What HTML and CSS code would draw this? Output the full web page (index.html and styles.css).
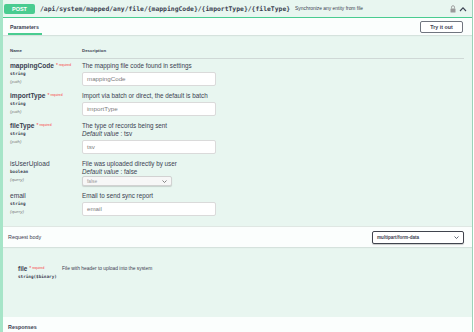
FILE: index.html
```html
<!DOCTYPE html>
<html lang="en">
<head>
    <meta charset="UTF-8">
    <meta name="viewport" content="width=device-width, initial-scale=1.0">
    <title>POST /api/system/mapped</title>
    <link rel="stylesheet" href="styles.css">
</head>
<body>
    <div class="opblock">
        <div class="summary">
            <span class="method">POST</span>
            <span class="path">/api/system/mapped/any/file/{mappingCode}/{importType}/{fileType}</span>
            <span class="summary-desc">Synchronize any entity from file</span>
            <span class="summary-icons">
                <svg class="lock" width="6" height="8" viewBox="0 0 6 8">
                    <path d="M1.5 3.5V2.2a1.5 1.5 0 0 1 3 0v1.3" fill="none" stroke="#9a9a9a" stroke-width="0.9"/>
                    <rect x="0.5" y="3.5" width="5" height="4" rx="0.5" fill="#9a9a9a"/>
                </svg>
                <svg class="chevron" width="8" height="6" viewBox="0 0 8 6">
                    <path d="M1 5l3-3.2L7 5" fill="none" stroke="#3b4151" stroke-width="1.1"/>
                </svg>
            </span>
        </div>

        <div class="section-header">
            <div class="tab">Parameters</div>
            <button class="try-btn">Try it out</button>
        </div>

        <div class="params">
            <div class="params-head">
                <div>Name</div>
                <div>Description</div>
            </div>

            <div class="param-row">
                <div class="param-name-col">
                    <div class="pname required">mappingCode<span class="star">*</span><span class="req">required</span></div>
                    <div class="ptype">string</div>
                    <div class="pin">(path)</div>
                </div>
                <div class="param-desc-col">
                    <div class="pdesc">The mapping file code found in settings</div>
                    <div class="text-input">mappingCode</div>
                </div>
            </div>

            <div class="param-row">
                <div class="param-name-col">
                    <div class="pname required">importType<span class="star">*</span><span class="req">required</span></div>
                    <div class="ptype">string</div>
                    <div class="pin">(path)</div>
                </div>
                <div class="param-desc-col">
                    <div class="pdesc">Import via batch or direct, the default is batch</div>
                    <div class="text-input">importType</div>
                </div>
            </div>

            <div class="param-row">
                <div class="param-name-col">
                    <div class="pname required">fileType<span class="star">*</span><span class="req">required</span></div>
                    <div class="ptype">string</div>
                    <div class="pin">(path)</div>
                </div>
                <div class="param-desc-col">
                    <div class="pdesc">The type of records being sent</div>
                    <div class="pdesc"><i>Default value</i> : tsv</div>
                    <div class="text-input">tsv</div>
                </div>
            </div>

            <div class="param-row">
                <div class="param-name-col">
                    <div class="pname">isUserUpload</div>
                    <div class="ptype">boolean</div>
                    <div class="pin">(query)</div>
                </div>
                <div class="param-desc-col">
                    <div class="pdesc">File was uploaded directly by user</div>
                    <div class="pdesc"><i>Default value</i> : false</div>
                    <div class="select-input">
                        <span>false</span>
                        <svg width="5" height="3" viewBox="0 0 5 3"><path d="M0.5 0.5l2 2 2-2" fill="none" stroke="#666" stroke-width="0.8"/></svg>
                    </div>
                </div>
            </div>

            <div class="param-row">
                <div class="param-name-col">
                    <div class="pname">email</div>
                    <div class="ptype">string</div>
                    <div class="pin">(query)</div>
                </div>
                <div class="param-desc-col">
                    <div class="pdesc">Email to send sync report</div>
                    <div class="text-input">email</div>
                </div>
            </div>
        </div>

        <div class="section-header body-header">
            <div class="section-title">Request body</div>
            <div class="content-type">
                <span>multipart/form-data</span>
                <svg width="5" height="3" viewBox="0 0 5 3"><path d="M0.5 0.5l2 2 2-2" fill="none" stroke="#3b4151" stroke-width="0.8"/></svg>
            </div>
        </div>

        <div class="body-params">
            <div class="body-row">
                <div class="body-name-col">
                    <div class="bname">file<span class="star">*</span><span class="req">required</span></div>
                    <div class="ptype">string($binary)</div>
                </div>
                <div class="bdesc">File with header to upload into the system</div>
            </div>
        </div>

        <div class="section-header responses-header">
            <div class="section-title bold">Responses</div>
        </div>
    </div>
</body>
</html>
```

FILE: styles.css
```css
body {
    margin: 0;
    font-family: "Liberation Sans", Arial, sans-serif;
    color: #3b4151;
    background-color: #fff;
}
.opblock {
    margin-right: 1px;
    height: 332px;
    border-left: 3px solid #a6e5c8;
    border-right: 1px solid #9bd3b8;
    background-color: #e8f6f0;
    overflow: hidden;
}
.summary {
    height: 18px;
    box-sizing: border-box;
    display: flex;
    align-items: center;
    padding: 0 5px 0 1px;
    border-bottom: 1px solid #49cc90;
}
.method {
    width: 31px;
    height: 10px;
    line-height: 10px;
    border-radius: 2px;
    background-color: #49cc90;
    color: #fff;
    font-size: 5.5px;
    font-weight: bold;
    text-align: center;
}
.path {
    margin-left: 5px;
    font-family: "DejaVu Sans Mono", monospace;
    font-size: 6.4px;
    font-weight: bold;
}
.summary-desc {
    margin-left: 5px;
    font-size: 4.9px;
}
.summary-icons {
    margin-left: auto;
    display: flex;
    align-items: center;
    gap: 3px;
}
.section-header {
    height: 17px;
    box-sizing: border-box;
    display: flex;
    justify-content: space-between;
    align-items: center;
    padding: 0 9px 0 5px;
    background-color: rgba(255, 255, 255, 0.82);
    box-shadow: 0 1px 1px rgba(0, 0, 0, 0.08);
}
.tab {
    align-self: stretch;
    display: flex;
    align-items: center;
    padding: 2px 3px 0 2px;
    border-bottom: 2px solid #49cc90;
    font-size: 5.3px;
    font-weight: bold;
}
.try-btn {
    width: 43px;
    height: 12px;
    padding: 0;
    border: 1px solid #70757f;
    border-radius: 2px;
    background: #fff;
    color: #3b4151;
    font-family: "Liberation Sans", Arial, sans-serif;
    font-size: 5.3px;
    font-weight: bold;
}
.params {
    padding: 12px 8px 7px 7px;
}
.params-head {
    display: grid;
    grid-template-columns: 72px 1fr;
    height: 11px;
    line-height: 8px;
    border-bottom: 1px solid #cfd8d6;
    font-size: 4.4px;
    font-weight: bold;
}
.param-row {
    display: grid;
    grid-template-columns: 72px 1fr;
    padding: 3px 0;
}
.pname {
    line-height: 8px;
    font-size: 6.6px;
}
.pname.required {
    font-weight: bold;
}
.star {
    margin-left: 2px;
    color: #f93e3e;
    font-size: 5px;
    vertical-align: top;
    position: relative;
    top: -1px;
    font-weight: normal;
}
.req {
    margin-left: 1px;
    color: #f93e3e;
    font-size: 3.3px;
    vertical-align: top;
    position: relative;
    top: -1px;
    font-weight: normal;
}
.ptype {
    line-height: 8px;
    font-family: "DejaVu Sans Mono", monospace;
    font-size: 4.3px;
    font-weight: bold;
}
.pin {
    line-height: 8px;
    font-size: 4.4px;
    font-style: italic;
    color: #808080;
}
.pdesc {
    line-height: 8px;
    font-size: 6.3px;
}
.text-input {
    width: 134px;
    height: 14px;
    box-sizing: border-box;
    margin-top: 2px;
    padding-left: 4px;
    line-height: 12px;
    border: 1px solid #dadada;
    border-radius: 2px;
    background-color: #fff;
    color: #7d7d7d;
    font-size: 6.2px;
}
.select-input {
    width: 90px;
    height: 10px;
    box-sizing: border-box;
    display: flex;
    justify-content: space-between;
    align-items: center;
    padding: 0 4px;
    border: 1px solid #d2d2d2;
    border-radius: 2px;
    background-color: #f7f7f7;
    box-shadow: 0 1px 1px rgba(0, 0, 0, 0.15);
    color: #9a9a9a;
    font-size: 4.8px;
}
.body-header {
    height: 21px;
    border-top: 1px solid #dfe7e3;
    padding-right: 8px;
}
.section-title {
    font-size: 5.4px;
}
.section-title.bold {
    font-weight: bold;
}
.content-type {
    width: 92px;
    height: 13px;
    box-sizing: border-box;
    display: flex;
    justify-content: space-between;
    align-items: center;
    padding: 0 4px 0 4px;
    border: 1px solid #41444e;
    border-radius: 2px;
    background-color: #fff;
    box-shadow: 0 1px 1px rgba(0, 0, 0, 0.2);
    font-size: 4.6px;
    font-weight: bold;
}
.body-params {
    height: 70px;
    box-sizing: border-box;
    padding: 18px 0 0 15px;
}
.body-row {
    display: flex;
}
.body-name-col {
    width: 44px;
}
.bname {
    line-height: 8px;
    font-size: 6.4px;
    font-weight: bold;
}
.bdesc {
    line-height: 7px;
    font-size: 4.9px;
}
.responses-header {
    height: 24px;
    align-items: flex-start;
    padding-top: 7px;
}
```
